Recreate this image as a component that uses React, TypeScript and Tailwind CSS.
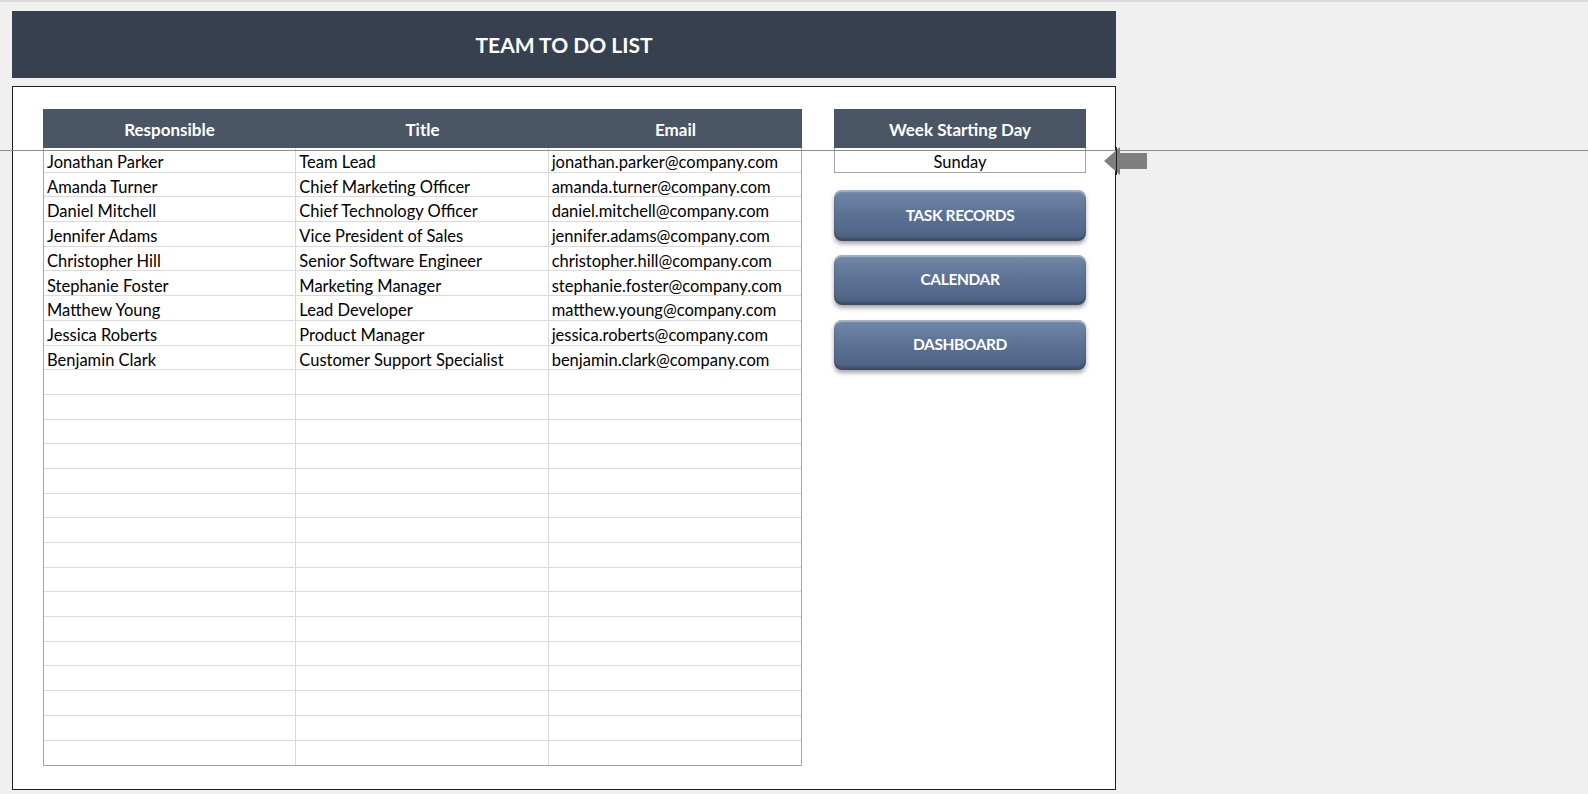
import React from "react";

const people = [
  ["Jonathan Parker", "Team Lead", "jonathan.parker@company.com"],
  ["Amanda Turner", "Chief Marketing Officer", "amanda.turner@company.com"],
  ["Daniel Mitchell", "Chief Technology Officer", "daniel.mitchell@company.com"],
  ["Jennifer Adams", "Vice President of Sales", "jennifer.adams@company.com"],
  ["Christopher Hill", "Senior Software Engineer", "christopher.hill@company.com"],
  ["Stephanie Foster", "Marketing Manager", "stephanie.foster@company.com"],
  ["Matthew Young", "Lead Developer", "matthew.young@company.com"],
  ["Jessica Roberts", "Product Manager", "jessica.roberts@company.com"],
  ["Benjamin Clark", "Customer Support Specialist", "benjamin.clark@company.com"],
];

const rows = [...people, ...Array.from({ length: 16 }, () => ["", "", ""])];

const NavButton: React.FC<{ label: string }> = ({ label }) => (
  <button className="w-[252px] h-[50.5px] rounded-[8px] bg-gradient-to-b from-[#7189a9] via-[#5b7193] to-[#4d6283] text-white text-[15.5px] font-bold tracking-tight shadow-[inset_0_2px_1px_rgba(255,255,255,0.35),inset_0_-3px_3px_rgba(0,0,0,0.25),0_3px_4px_rgba(0,0,0,0.35)]">
    {label}
  </button>
);

export default function App() {
  return (
    <div
      className="relative w-[1588px] h-[794px] bg-[#f0f0f0] border-t-2 border-[#dcdcdc] overflow-hidden"
      style={{ fontFamily: "Lato, 'Open Sans', sans-serif" }}
    >
      <div className="pl-[12px] pt-[9px] w-[1116px]">
        <header className="h-[67px] bg-[#36404f] flex items-center justify-center text-white text-[21px] font-bold">
          TEAM TO DO LIST
        </header>

        <div className="mt-[8px] h-[704px] bg-white border border-[#1e1e1e] pl-[30px] pt-[22px] flex gap-[32px]">
          {/* member table */}
          <div className="w-[759px]">
            <div className="grid grid-cols-3 h-[39px] bg-[#4a5566] text-white text-[17px] font-bold">
              <div className="flex items-center justify-center pt-[2px]">Responsible</div>
              <div className="flex items-center justify-center pt-[2px]">Title</div>
              <div className="flex items-center justify-center pt-[2px]">Email</div>
            </div>
            <div className="border-l border-b border-r border-[#a6a6a6]">
              {rows.map((r, i) => (
                <div key={i} className="grid grid-cols-3 h-[24.7px] border-b border-[#dadada] last:border-b-0 text-[16.5px] text-black leading-none">
                  <div className="flex items-center pl-[3px] pt-[5px] border-r border-[#dadada]">{r[0]}</div>
                  <div className="flex items-center pl-[3px] pt-[5px] border-r border-[#dadada]">{r[1]}</div>
                  <div className="flex items-center pl-[3px] pt-[5px]">{r[2]}</div>
                </div>
              ))}
            </div>
          </div>

          {/* settings + navigation */}
          <div className="w-[252px]">
            <div className="h-[39px] pt-[2px] bg-[#4a5566] text-white text-[17px] font-bold flex items-center justify-center">
              Week Starting Day
            </div>
            <div className="h-[25px] pt-[4px] border border-t-0 border-[#a6a6a6] flex items-center justify-center text-[16.5px] text-black">
              Sunday
            </div>
            <div className="mt-[17px] flex flex-col gap-[14.3px]">
              <NavButton label="TASK RECORDS" />
              <NavButton label="CALENDAR" />
              <NavButton label="DASHBOARD" />
            </div>
          </div>
        </div>
      </div>

      {/* freeze line */}
      <div className="absolute left-0 top-[148px] w-[1588px] h-px bg-[#8c8c8c]" />
      {/* pointer arrow */}
      <svg className="absolute left-[1104px] top-[145px]" width="43" height="28" viewBox="0 0 43 28">
        <polygon points="0,14 16,0 16,6 43,6 43,22 16,22 16,28" fill="#7f7f7f" />
      </svg>
      <div className="absolute left-[1116px] top-[145px] w-px h-[28px] bg-[#1e1e1e]" />
    </div>
  );
}
